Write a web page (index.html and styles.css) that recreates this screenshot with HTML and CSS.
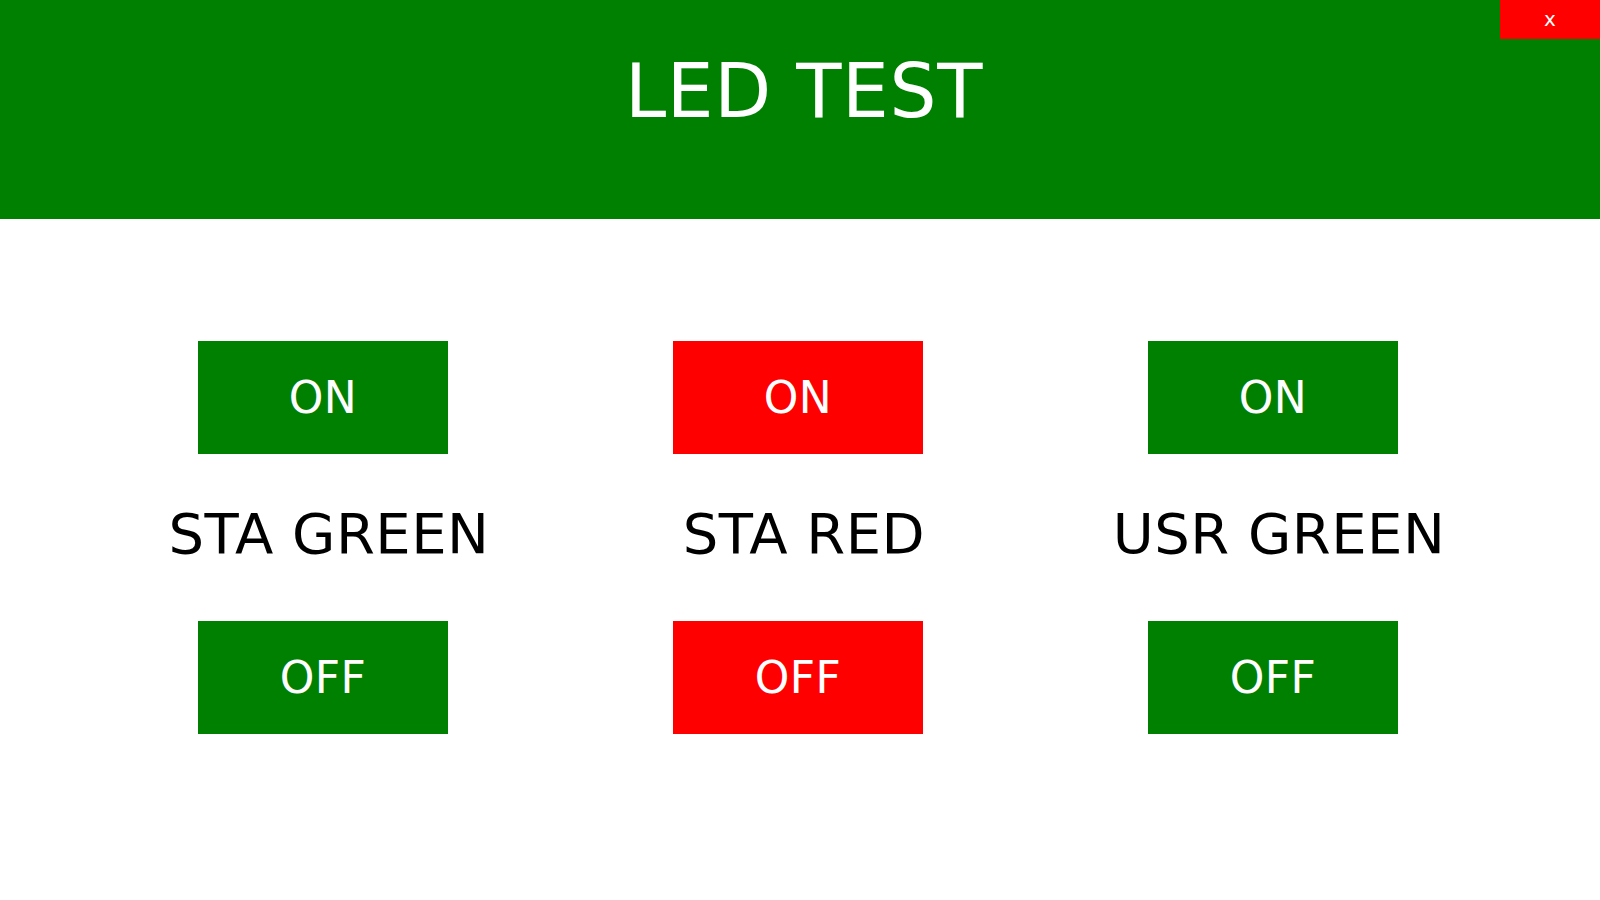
FILE: index.html
```html
<!DOCTYPE html>
<html lang="en">
<head>
    <meta charset="UTF-8">
    <meta name="viewport" content="width=device-width, initial-scale=1.0">
    <title>LED Test</title>
    <link rel="stylesheet" href="styles.css">
</head>
<body>
    <div class="header">
        <h1 class="title">LED TEST</h1>
        <button class="close-btn">x</button>
    </div>
    <div class="leds">
        <div class="led">
            <button class="led-btn green">ON</button>
            <div class="led-name">STA GREEN</div>
            <button class="led-btn green">OFF</button>
        </div>
        <div class="led">
            <button class="led-btn red">ON</button>
            <div class="led-name">STA RED</div>
            <button class="led-btn red">OFF</button>
        </div>
        <div class="led">
            <button class="led-btn green">ON</button>
            <div class="led-name">USR GREEN</div>
            <button class="led-btn green">OFF</button>
        </div>
    </div>
</body>
</html>
```

FILE: styles.css
```css
body {
    margin: 0;
    height: 100vh;
    font-family: "DejaVu Sans", Verdana, sans-serif;
    background-color: #fff;
    overflow: hidden;
}
.header {
    position: relative;
    height: 219px;
    box-sizing: border-box;
    padding-top: 48px;
    background-color: #008000;
    text-align: center;
}
.title {
    margin: 0;
    padding-left: 8px;
    font-size: 74px;
    font-weight: normal;
    letter-spacing: 0.7px;
    line-height: normal;
    color: #fff;
}
.close-btn {
    position: absolute;
    top: 0;
    right: 0;
    width: 100px;
    height: 39px;
    border: none;
    padding: 0 0 2px 0;
    background-color: #f00;
    color: #fff;
    font-family: "DejaVu Sans", sans-serif;
    font-size: 20px;
}
.leds {
    display: flex;
    gap: 135px;
    padding: 122px 0 0 153px;
}
.led {
    width: 340px;
    display: flex;
    flex-direction: column;
    align-items: center;
}
.led-btn {
    width: 250px;
    height: 113px;
    border: none;
    padding: 0;
    color: #fff;
    font-family: "DejaVu Sans", sans-serif;
    font-size: 44px;
    letter-spacing: 0.5px;
}
.green {
    background-color: #008000;
}
.red {
    background-color: #f00;
}
.led-name {
    height: 167px;
    box-sizing: border-box;
    padding: 0 0 8px 12px;
    line-height: 159px;
    font-size: 56px;
    letter-spacing: 0.5px;
    color: #000;
    white-space: nowrap;
}
```
